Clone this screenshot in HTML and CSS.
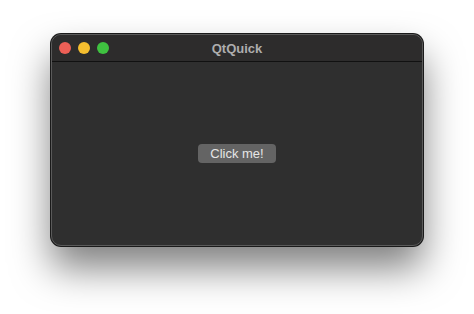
FILE: index.html
```html
<!DOCTYPE html>
<html lang="en">
<head>
  <meta charset="UTF-8">
  <title>QtQuick</title>
  <link rel="stylesheet" href="styles.css">
</head>
<body>
  <div class="window">
    <div class="titlebar">
      <div class="lights">
        <span class="light red"></span>
        <span class="light yellow"></span>
        <span class="light green"></span>
      </div>
      <div class="title">QtQuick</div>
    </div>
    <div class="content">
      <button class="btn">Click me!</button>
    </div>
  </div>
</body>
</html>
```

FILE: styles.css
```css
html {
  background: #ffffff;
}

body {
  margin: 0;
  padding-top: 34px;
  min-height: 314px;
  box-sizing: border-box;
  font-family: 'Liberation Sans', Arial, sans-serif;
  display: flex;
  justify-content: center;
  align-items: flex-start;
}

.window {
  width: 372px;
  height: 212px;
  box-sizing: border-box;
  background: #2f2f2f;
  border: 1px solid #5a5a5a;
  border-radius: 10px;
  box-shadow: 0 0 0 1px #1a1a1a, 0 22px 38px rgba(0, 0, 0, 0.5);
  display: flex;
  flex-direction: column;
  overflow: hidden;
}

.titlebar {
  position: relative;
  height: 26px;
  background: #2d2c2c;
  border-bottom: 1px solid #111111;
  display: flex;
  align-items: center;
  justify-content: center;
}

.lights {
  position: absolute;
  left: 7px;
  top: 7px;
  display: flex;
  gap: 7px;
}

.light {
  width: 12px;
  height: 12px;
  border-radius: 50%;
}

.red { background: #ed5f56; }
.yellow { background: #f5be2f; }
.green { background: #3fc240; }

.title {
  color: #aeaeae;
  font-weight: bold;
  font-size: 13px;
}

.content {
  flex: 1;
  display: flex;
  align-items: center;
  justify-content: center;
}

.btn {
  width: 78px;
  height: 19px;
  padding: 0;
  background: #646464;
  color: #e6e6e6;
  border: none;
  border-radius: 4px;
  font-family: inherit;
  font-size: 13px;
}
```
